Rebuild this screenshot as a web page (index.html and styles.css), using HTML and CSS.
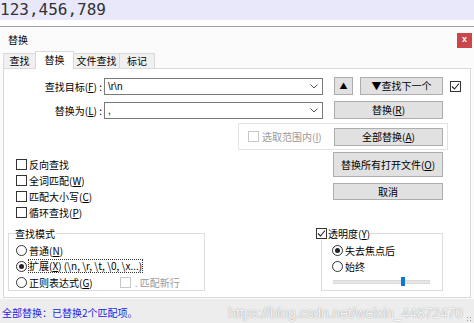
FILE: index.html
```html
<!DOCTYPE html>
<html>
  <head>
    <meta charset="UTF-8" />
    <title>替换</title>
    <link rel="stylesheet" href="styles.css">
  </head>
  <body>
    <div class="editor-line">123,456,789</div>

    <div class="dialog">
      <div class="titlebar">
        <span class="title">替换</span>
        <span class="close">x</span>
      </div>

      <div class="tabs">
        <div class="tab tab-find">查找</div>
        <div class="tab tab-replace active">替换</div>
        <div class="tab tab-files">文件查找</div>
        <div class="tab tab-mark">标记</div>
      </div>

      <div class="panel">
        <div class="row row-find">
          <label class="field-label">查找目标(<u>F</u>) :</label>
          <div class="combo">
            <span>\r\n</span>
            <svg class="chevron" width="8" height="5" viewBox="0 0 8 5"><path d="M0.5 0.5 L4 4 L7.5 0.5" fill="none" stroke="#555" stroke-width="1"/></svg>
          </div>
          <button class="button btn-up">▲</button>
          <button class="button btn-next">▼查找下一个</button>
          <span class="checkbox checked">
            <svg width="9" height="9" viewBox="0 0 9 9"><path d="M1 4.5 L3.5 7 L8 1.5" fill="none" stroke="#222" stroke-width="1.1"/></svg>
          </span>
        </div>

        <div class="row row-replace">
          <label class="field-label">替换为(<u>L</u>) :</label>
          <div class="combo">
            <span>,</span>
            <svg class="chevron" width="8" height="5" viewBox="0 0 8 5"><path d="M0.5 0.5 L4 4 L7.5 0.5" fill="none" stroke="#555" stroke-width="1"/></svg>
          </div>
          <button class="button btn-replace">替换(<u>R</u>)</button>
        </div>

        <div class="selection-box">
          <span class="checkbox disabled"></span>
          <span class="muted">选取范围内(<u>I</u>)</span>
          <button class="button btn-all">全部替换(<u>A</u>)</button>
        </div>

        <div class="middle">
          <div class="options">
            <div class="option"><span class="checkbox"></span>反向查找</div>
            <div class="option"><span class="checkbox"></span>全词匹配(<u>W</u>)</div>
            <div class="option"><span class="checkbox"></span>匹配大小写(<u>C</u>)</div>
            <div class="option"><span class="checkbox"></span>循环查找(<u>P</u>)</div>
          </div>
          <div class="actions">
            <button class="button btn-open">替换所有打开文件(<u>O</u>)</button>
            <button class="button btn-cancel">取消</button>
          </div>
        </div>

        <div class="bottom">
          <fieldset class="group mode">
            <legend>查找模式</legend>
            <div class="option"><span class="radio"></span>普通(<u>N</u>)</div>
            <div class="option"><span class="radio on"></span><span class="focus">扩展(<u>X</u>) (\n, \r, \t, \0, \x...)</span></div>
            <div class="option">
              <span class="radio"></span>正则表达式(<u>G</u>)
              <span class="checkbox disabled newline"></span><span class="muted">. 匹配新行</span>
            </div>
          </fieldset>

          <fieldset class="group transparency">
            <legend>
              <span class="checkbox checked">
                <svg width="9" height="9" viewBox="0 0 9 9"><path d="M1 4.5 L3.5 7 L8 1.5" fill="none" stroke="#222" stroke-width="1.1"/></svg>
              </span>透明度(<u>Y</u>)
            </legend>
            <div class="option"><span class="radio on"></span>失去焦点后</div>
            <div class="option"><span class="radio"></span>始终</div>
            <div class="slider">
              <div class="track"></div>
              <div class="thumb" style="left: 70%"></div>
            </div>
          </fieldset>
        </div>
      </div>

      <div class="status">
        <span class="status-text">全部替换：已替换2个匹配项。</span>
        <span class="watermark">https://blog.csdn.net/weixin_44872470</span>
        <span class="grip"></span>
      </div>
    </div>
  </body>
</html>
```

FILE: styles.css
```css
* {
  box-sizing: border-box;
}

body {
  margin: 0;
  width: 474px;
  height: 323px;
  overflow: hidden;
  background: #fff;
  font-family: "Noto Sans CJK SC", sans-serif;
  font-size: 10px;
  color: #000;
}

u {
  text-decoration: underline;
  text-underline-offset: 1px;
}

.editor-line {
  height: 20px;
  background: #e8e8fa;
  font-family: "DejaVu Sans Mono", monospace;
  font-size: 16px;
  line-height: 20px;
  color: #333;
}

.dialog {
  margin-top: 6px;
  border-top: 1px solid #a0a0a0;
  background: #fbfbfb;
  height: 297px;
}

.titlebar {
  height: 25px;
  display: flex;
  align-items: center;
  justify-content: space-between;
  padding: 0 2px 0 8px;
}

.close {
  width: 15px;
  height: 15px;
  margin-top: 1px;
  background: #c9474a;
  color: #fff;
  font-size: 9px;
  font-weight: bold;
  line-height: 13px;
  text-align: center;
  font-family: "Liberation Sans", sans-serif;
}

/* tabs */
.tabs {
  display: flex;
  align-items: flex-end;
  height: 16px;
  padding-left: 3px;
}

.tab {
  height: 15px;
  border: 1px solid #d9d9d9;
  border-bottom: none;
  background: #f0f0f0;
  text-align: center;
  line-height: 14px;
  margin-left: -1px;
}

.tab:first-child {
  margin-left: 0;
}

.tab.active {
  height: 18px;
  margin-bottom: -1px;
  background: #fff;
  position: relative;
  z-index: 1;
  line-height: 15px;
}

.tab-find { width: 33px; }
.tab-replace { width: 39px; }
.tab-files { width: 47px; }
.tab-mark { width: 36px; }

.panel {
  margin: 0 3px;
  height: 230px;
  border: 1px solid #d9d9d9;
  background: #fff;
}

/* controls */
.button {
  font-family: "Noto Sans CJK SC", sans-serif;
  font-size: 10px;
  color: #000;
  background: #e1e1e1;
  border: 1px solid #adadad;
  padding: 0;
  line-height: 14px;
}

.checkbox {
  display: inline-flex;
  align-items: center;
  justify-content: center;
  width: 11px;
  height: 11px;
  border: 1px solid #333;
  background: #fff;
  flex: none;
}

.checkbox.disabled {
  border-color: #c8c8c8;
}

.radio {
  display: inline-flex;
  align-items: center;
  justify-content: center;
  width: 11px;
  height: 11px;
  border: 1px solid #333;
  border-radius: 50%;
  background: #fff;
  flex: none;
}

.radio.on::after {
  content: "";
  width: 5px;
  height: 5px;
  border-radius: 50%;
  background: #222;
}

.muted {
  color: #9a9a9a;
}

.row {
  display: flex;
  align-items: center;
  height: 18px;
}

.row-find {
  margin-top: 8px;
}

.row-replace {
  margin-top: 6px;
}

.field-label {
  width: 98px;
  text-align: right;
}

.combo {
  margin-left: 2px;
  width: 219px;
  height: 17px;
  border: 1px solid #7a7a7a;
  background: #fff;
  display: flex;
  align-items: center;
  justify-content: space-between;
  padding: 0 4px 0 3px;
  font-family: "Liberation Sans", sans-serif;
}

.btn-up {
  margin-left: 11px;
  width: 19px;
  height: 18px;
  font-size: 8px;
}

.btn-next {
  margin-left: 7px;
  width: 83px;
  height: 18px;
}

.row .checkbox {
  margin-left: 7px;
}

.btn-replace {
  margin-left: 11px;
  width: 109px;
  height: 18px;
}

.selection-box {
  margin: 4px 0 0 234px;
  width: 210px;
  height: 27px;
  border: 1px solid #e3e3e3;
  display: flex;
  align-items: center;
  padding-left: 9px;
}

.selection-box .muted {
  margin-left: 3px;
}

.btn-all {
  margin-left: auto;
  margin-right: 4px;
  width: 109px;
  height: 18px;
}

.middle {
  display: flex;
  margin-top: 2px;
}

.options {
  padding: 4px 0 0 12px;
}

.option {
  display: flex;
  align-items: center;
  height: 16px;
  white-space: nowrap;
}

.option .checkbox,
.option .radio {
  margin-right: 2px;
}

.actions {
  margin-left: auto;
  margin-right: 27px;
  width: 110px;
  display: flex;
  flex-direction: column;
}

.btn-open {
  height: 25px;
}

.btn-cancel {
  margin-top: 6px;
  height: 17px;
}

/* group boxes */
.bottom {
  display: flex;
  margin-top: 7px;
}

.group {
  margin: 0;
  border: 1px solid #dcdcdc;
  padding: 2px 0 0 7px;
  height: 64px;
}

.group legend {
  padding: 0 1px;
  line-height: 13px;
  height: 13px;
  display: flex;
  align-items: center;
}

.mode {
  margin-left: 4px;
  width: 197px;
}

.mode legend {
  margin-left: -2px;
}

.focus {
  outline: 1px dotted #333;
  outline-offset: 0;
  line-height: 12px;
}

.newline {
  margin-left: 27px;
  margin-right: 4px !important;
}

.transparency {
  margin-left: 116px;
  width: 122px;
  padding-left: 10px;
}

.transparency legend {
  margin-left: -16px;
  padding: 0;
}

.transparency legend .checkbox {
  margin-right: 1px;
}

.slider {
  position: relative;
  height: 16px;
  width: 97px;
  margin-left: 1px;
}

.track {
  position: absolute;
  left: 0;
  right: 0;
  top: 6px;
  height: 4px;
  background: #e6e6e6;
  border: 1px solid #dadada;
}

.thumb {
  position: absolute;
  top: 3px;
  width: 4px;
  height: 9px;
  background: #0a78d4;
}

/* status bar */
.status {
  position: relative;
  height: 25px;
  margin-top: 1px;
  background: #ededed;
  display: flex;
  align-items: center;
  padding: 0 11px 0 2px;
}

.status-text {
  color: #1c1ce8;
  padding-top: 2px;
}

.watermark {
  margin-left: auto;
  padding-top: 3px;
  font-family: "Liberation Sans", sans-serif;
  font-size: 13.8px;
  color: rgba(255, 255, 255, 0.92);
  text-shadow: 0 0 1px rgba(0, 0, 0, 0.35), 0 0 2px rgba(0, 0, 0, 0.12);
}

.grip {
  position: absolute;
  right: 2px;
  bottom: 2px;
  width: 6px;
  height: 6px;
  background: radial-gradient(circle, #999 0.8px, transparent 1px) 0 0 / 3px 3px;
}
```
